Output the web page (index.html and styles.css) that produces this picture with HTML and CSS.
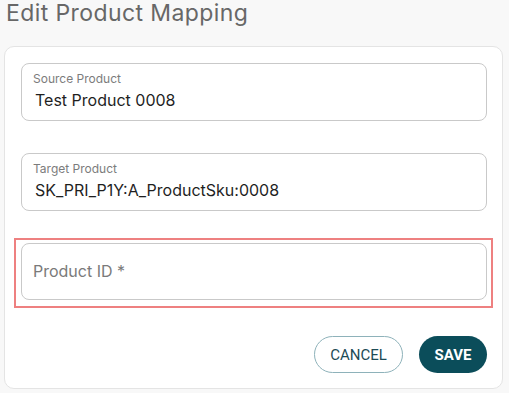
FILE: index.html
```html
<!DOCTYPE html>
<html>
<head>
<meta charset="utf-8">
<link rel="stylesheet" href="styles.css">
</head>
<body>
<h1 class="title">Edit Product Mapping</h1>
<div class="card">
  <div class="field">
    <div class="label">Source Product</div>
    <div class="value">Test Product 0008</div>
  </div>
  <div class="field">
    <div class="label">Target Product</div>
    <div class="value">SK_PRI_P1Y:A_ProductSku:0008</div>
  </div>
  <div class="highlight-wrap">
    <div class="field field-empty">
      <div class="placeholder">Product ID *</div>
    </div>
    <div class="highlight"></div>
  </div>
  <div class="actions">
    <button class="btn btn-outline">CANCEL</button>
    <button class="btn btn-primary">SAVE</button>
  </div>
</div>
</body>
</html>
```

FILE: styles.css
```css
html, body {
  margin: 0;
  padding: 0;
  background: #f8f8f8;
  font-family: Inter, "Noto Sans", sans-serif;
}
.title {
  margin: 0 0 19px 0;
  padding-left: 6px;
  font-size: 23px;
  line-height: 27px;
  letter-spacing: 0.4px;
  font-weight: 400;
  color: #676767;
}
.card {
  margin: 0 6px 0 4px;
  background: #fff;
  border: 1px solid #e4e4e4;
  border-radius: 10px;
  padding: 16px 15px 15px 16px;
  display: flex;
  flex-direction: column;
  gap: 32px;
}
.field {
  box-sizing: border-box;
  height: 58px;
  border: 1px solid #c9c9c9;
  border-radius: 8px;
  padding: 8px 12px 0 11px;
}
.label {
  font-size: 12px;
  line-height: 14px;
  color: #7c7c7c;
}
.value {
  margin-top: 4px;
  padding-left: 2px;
  font-size: 16px;
  line-height: 20px;
  color: #1f1f1f;
}
.highlight-wrap {
  position: relative;
}
.field-empty {
  height: 57px;
  display: flex;
  align-items: center;
  padding: 0 12px 2px 11px;
}
.placeholder {
  font-size: 16px;
  line-height: 20px;
  color: #7a7a7a;
}
.highlight {
  position: absolute;
  top: -5px;
  left: -7px;
  right: -6px;
  bottom: -8px;
  border: 2px solid #ee8080;
  pointer-events: none;
}
.actions {
  display: flex;
  justify-content: flex-end;
  gap: 16px;
  margin-top: 4px;
}
.btn {
  box-sizing: border-box;
  height: 37px;
  border-radius: 19px;
  font-family: Roboto, "Liberation Sans", sans-serif;
  font-size: 15px;
  cursor: pointer;
  padding: 0;
}
.btn-outline {
  width: 89px;
  background: #fff;
  border: 1px solid #8eb2ba;
  color: #1d4b56;
  font-weight: 400;
}
.btn-primary {
  width: 68px;
  background: #0b4d5a;
  border: none;
  color: #fff;
  font-weight: 700;
}
```
